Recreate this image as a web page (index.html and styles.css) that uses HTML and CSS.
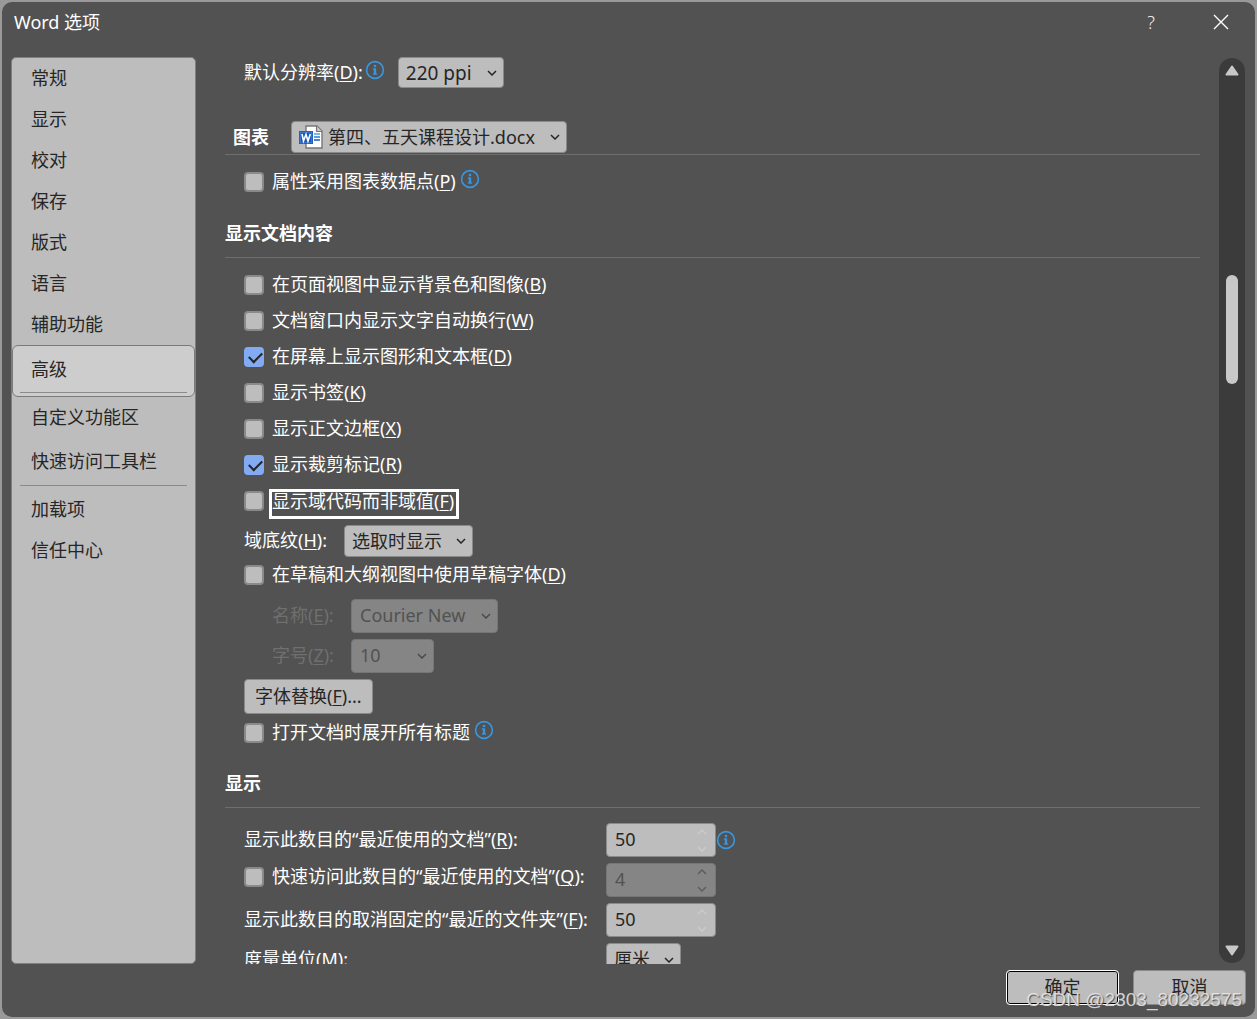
FILE: index.html
```html
<!DOCTYPE html>
<html lang="zh-CN">
<head>
<meta charset="UTF-8">
<meta name="viewport" content="width=device-width, initial-scale=1.0">
<title>Word 选项</title>
<link rel="stylesheet" href="styles.css">
</head>
<body>
    <!-- 公用图标 -->
    <svg class="symbols" width="0" height="0" aria-hidden="true">
        <symbol id="icon-info" viewBox="0 0 20 20">
            <circle cx="10" cy="10" r="8.4" fill="none" stroke="#3a96dd" stroke-width="1.6"/>
            <path d="M9 5h2v2H9zM8 8.5h3v5h1v1H8v-1h1v-4H8z" fill="#3a96dd" stroke="#3a96dd" stroke-width=".4"/>
        </symbol>
        <symbol id="icon-down" viewBox="0 0 10 6">
            <path d="M1 1l4 4 4-4" fill="none" stroke="currentColor" stroke-width="1.5"/>
        </symbol>
        <symbol id="icon-up" viewBox="0 0 10 6">
            <path d="M1 5l4-4 4 4" fill="none" stroke="currentColor" stroke-width="1.5"/>
        </symbol>
    </svg>

    <div class="window">
        <header class="titlebar">
            <h1>Word 选项</h1>
            <button type="button" class="title-btn help">?</button>
            <button type="button" class="title-btn close" aria-label="关闭">
                <svg width="16" height="16" viewBox="0 0 16 16"><path d="M1 1l14 14M15 1L1 15" stroke="#fff" stroke-width="1.4"/></svg>
            </button>
        </header>

        <div class="main">
            <nav class="menu">
                <a href="#">常规</a>
                <a href="#">显示</a>
                <a href="#">校对</a>
                <a href="#">保存</a>
                <a href="#">版式</a>
                <a href="#">语言</a>
                <a href="#">辅助功能</a>
                <a href="#" class="active">高级</a>
                <a href="#">自定义功能区</a>
                <a href="#" class="last-in-group">快速访问工具栏</a>
                <a href="#">加载项</a>
                <a href="#">信任中心</a>
            </nav>

            <div class="content">
                <div class="row first">
                    <label for="dpi">默认分辨率(<u>D</u>):</label>
                    <svg class="info"><use href="#icon-info"/></svg>
                    <span class="combo dpi">
                        <select id="dpi"><option>220 ppi</option></select>
                        <svg class="arrow"><use href="#icon-down"/></svg>
                    </span>
                </div>

                <div class="chart-head">
                    <h2><label for="chartDoc">图表</label></h2>
                    <span class="combo doc">
                        <svg class="word-icon" viewBox="0 0 24 24">
                            <path d="M7 1h11l5 5v17H7z" fill="#fff" stroke="#797774" stroke-width="1.4"/>
                            <path d="M17.500 1v5.500H23" fill="#c8c6c4" stroke="#797774" stroke-width="1.2"/>
                            <path d="M15 9h6" stroke="#41a5ee" stroke-width="1.5"/>
                            <path d="M15 12h6" stroke="#2b7cd3" stroke-width="1.5"/>
                            <path d="M15 15h6" stroke="#185abd" stroke-width="1.5"/>
                            <rect x="0" y="6" width="14" height="13" fill="#185abd"/>
                            <rect x="1.200" y="7.200" width="11.600" height="10.600" fill="none" stroke="#4a86d8" stroke-width=".8"/>
                            <path d="M3 9l1.500 7L7 9.500 9 16l2.300-7" fill="none" stroke="#fff" stroke-width="1.600"/>
                        </svg>
                        <select id="chartDoc"><option>第四、五天课程设计.docx</option></select>
                        <svg class="arrow"><use href="#icon-down"/></svg>
                    </span>
                </div>
                <div class="group">
                    <div class="row points">
                        <input type="checkbox" id="points"><label for="points">属性采用图表数据点(<u>P</u>)</label>
                        <svg class="info"><use href="#icon-info"/></svg>
                    </div>
                </div>

                <h2 class="section-title">显示文档内容</h2>
                <div class="group">
                    <div class="row"><input type="checkbox" id="bg"><label for="bg">在页面视图中显示背景色和图像(<u>B</u>)</label></div>
                    <div class="row"><input type="checkbox" id="wrap"><label for="wrap">文档窗口内显示文字自动换行(<u>W</u>)</label></div>
                    <div class="row"><input type="checkbox" id="shapes" checked><label for="shapes">在屏幕上显示图形和文本框(<u>D</u>)</label></div>
                    <div class="row"><input type="checkbox" id="bookmarks"><label for="bookmarks">显示书签(<u>K</u>)</label></div>
                    <div class="row"><input type="checkbox" id="borders"><label for="borders">显示正文边框(<u>X</u>)</label></div>
                    <div class="row"><input type="checkbox" id="crop" checked><label for="crop">显示裁剪标记(<u>R</u>)</label></div>
                    <div class="row"><input type="checkbox" id="codes"><label for="codes" class="focused">显示域代码而非域值(<u>F</u>)</label></div>
                    <div class="row shading">
                        <label for="shade">域底纹(<u>H</u>):</label>
                        <span class="combo shade">
                            <select id="shade"><option>选取时显示</option></select>
                            <svg class="arrow"><use href="#icon-down"/></svg>
                        </span>
                    </div>
                    <div class="row"><input type="checkbox" id="draft"><label for="draft">在草稿和大纲视图中使用草稿字体(<u>D</u>)</label></div>
                    <div class="sub">
                        <div class="row tall disabled">
                            <label for="fontName">名称(<u>E</u>):</label>
                            <span class="combo font-name">
                                <select id="fontName" disabled><option>Courier New</option></select>
                                <svg class="arrow"><use href="#icon-down"/></svg>
                            </span>
                        </div>
                        <div class="row tall disabled">
                            <label for="fontSize">字号(<u>Z</u>):</label>
                            <span class="combo font-size">
                                <select id="fontSize" disabled><option>10</option></select>
                                <svg class="arrow"><use href="#icon-down"/></svg>
                            </span>
                        </div>
                    </div>
                    <div class="row tall"><button type="button" class="btn">字体替换(<u>F</u>)...</button></div>
                    <div class="row last">
                        <input type="checkbox" id="expand"><label for="expand">打开文档时展开所有标题</label>
                        <svg class="info"><use href="#icon-info"/></svg>
                    </div>
                </div>

                <h2 class="section-title">显示</h2>
                <div class="group numbers">
                    <div class="row tall">
                        <div class="name"><label for="recent">显示此数目的“最近使用的文档”(<u>R</u>):</label></div>
                        <span class="spin">
                            <input type="text" id="recent" value="50">
                            <svg class="up"><use href="#icon-up"/></svg>
                            <svg class="down"><use href="#icon-down"/></svg>
                        </span>
                        <svg class="info"><use href="#icon-info"/></svg>
                    </div>
                    <div class="row tall">
                        <div class="name with-check"><input type="checkbox" id="quick"><label for="quick">快速访问此数目的“最近使用的文档”(<u>Q</u>):</label></div>
                        <span class="spin off">
                            <input type="text" id="quickNum" value="4" aria-label="快速访问数目" disabled>
                            <svg class="up"><use href="#icon-up"/></svg>
                            <svg class="down"><use href="#icon-down"/></svg>
                        </span>
                    </div>
                    <div class="row tall">
                        <div class="name"><label for="folders">显示此数目的取消固定的“最近的文件夹”(<u>F</u>):</label></div>
                        <span class="spin">
                            <input type="text" id="folders" value="50">
                            <svg class="up"><use href="#icon-up"/></svg>
                            <svg class="down"><use href="#icon-down"/></svg>
                        </span>
                    </div>
                    <div class="row tall">
                        <div class="name"><label for="unit">度量单位(<u>M</u>):</label></div>
                        <span class="combo unit">
                            <select id="unit"><option>厘米</option></select>
                            <svg class="arrow"><use href="#icon-down"/></svg>
                        </span>
                    </div>
                </div>
            </div>

            <!-- 滚动条 -->
            <div class="scrollbar">
                <svg width="14" height="11" viewBox="0 0 14 11"><path d="M7 1.500L12.500 9.500H1.500z" fill="#c8c8c8" stroke="#c8c8c8" stroke-width="2" stroke-linejoin="round"/></svg>
                <div class="track"><div class="thumb"></div></div>
                <svg width="14" height="11" viewBox="0 0 14 11"><path d="M7 9.500L12.500 1.500H1.500z" fill="#c8c8c8" stroke="#c8c8c8" stroke-width="2" stroke-linejoin="round"/></svg>
            </div>
        </div>

        <footer class="footer">
            <button type="button" class="btn default">确定</button>
            <button type="button" class="btn">取消</button>
            <span class="watermark">CSDN @2303_80232575</span>
        </footer>
    </div>
</body>
</html>
```
FILE: styles.css
```css
* {
    box-sizing: border-box;
}
body {
    margin: 0;
    background-color: #999;
    color: #fff;
    font-family: "Noto Sans", "Noto Sans CJK SC", sans-serif;
    font-size: 18px;
    line-height: 26px;
}
.symbols {
    position: absolute;
}
svg {
    flex: none;
}
u {
    text-underline-offset: 2px;
    text-decoration-thickness: 1px;
}
button, select, input {
    font: inherit;
    color: #262626;
}
.window {
    display: flex;
    flex-direction: column;
    height: 100vh;
    border: 2px solid #999;
    border-radius: 12px;
    background-color: #525252;
    overflow: hidden;
}

/* 标题栏 */
.titlebar {
    display: flex;
    align-items: center;
    height: 55px;
    padding: 0 16px 15px 12px;
}
.titlebar h1 {
    flex: 1;
    margin: 0;
    font-size: 18px;
    font-weight: normal;
}
.title-btn {
    width: 36px;
    height: 32px;
    padding: 0;
    border: 0;
    background: none;
    color: #fff;
}
.help {
    font-family: "Open Sans", sans-serif;
    font-weight: 300;
}
.close {
    display: flex;
    align-items: center;
    justify-content: center;
    margin-left: 34px;
}

.main {
    display: flex;
    flex: 1;
    min-height: 0;
    padding: 0 10px 0 9px;
}

/* 左侧菜单 */
.menu {
    flex: none;
    width: 185px;
    border: 1px solid #7f7f7f;
    border-radius: 5px;
    background-color: #bdbdbd;
}
.menu a {
    display: block;
    padding-left: 19px;
    color: #262626;
    line-height: 41px;
    text-decoration: none;
}
.menu .active {
    height: 52px;
    padding: 0 7px 0 18px;
    border: 1px solid #7a7a7a;
    border-radius: 6px;
    background-color: #cdcdcd;
    line-height: 46px;
}
.menu .active::after,
.menu .last-in-group::after {
    content: "";
    display: block;
    height: 1px;
    margin-left: -11px;
    background-color: #8a8a8a;
}
.menu .last-in-group {
    margin-bottom: 3px;
    padding-right: 8px;
    line-height: 47px;
}

/* 右侧选项 */
.content {
    flex: 1;
    min-width: 0;
    margin: 0 19px 0 29px;
    overflow: hidden;
}
h2 {
    margin: 0;
    font-size: 18px;
    font-weight: bold;
}
.row {
    display: flex;
    align-items: center;
    height: 36px;
}
.row label {
    padding-bottom: 2px;
}
.row.first {
    height: 31px;
    padding-left: 19px;
}
.row.tall {
    height: 40px;
}
.row.last {
    height: 33px;
}
.row.points {
    height: 35px;
}
.row.shading {
    height: 38px;
    padding-top: 6px;
}
.group {
    padding: 9px 0 0 19px;
}
.chart-head {
    display: flex;
    align-items: center;
    margin-top: 33px;
    padding: 0 0 1px 8px;
    border-bottom: 1px solid #6e6e6e;
}
.chart-head .combo {
    margin-left: 22px;
}
.section-title {
    height: 59px;
    padding-top: 10px;
    border-bottom: 1px solid #6e6e6e;
    line-height: 48px;
}
.info {
    width: 20px;
    height: 20px;
    margin: 0 0 5px 4px;
}
.row.first .info {
    margin-left: 2px;
}
.numbers .info {
    margin: 0;
}

input[type="checkbox"] {
    appearance: none;
    flex: none;
    width: 20px;
    height: 20px;
    margin: 0 8px 0 0;
    border: 2px solid #8a8a8a;
    border-radius: 4px;
    background-color: #bdbdbd;
}
input[type="checkbox"]:checked {
    position: relative;
    border-color: #82abf3;
    background-color: #82abf3;
}
input[type="checkbox"]:checked::after {
    content: "";
    position: absolute;
    left: 3px;
    top: 3px;
    width: 11px;
    height: 6px;
    border: solid #262626;
    border-width: 0 0 2px 2px;
    transform: rotate(-45deg);
}
.row .focused {
    margin: 5px 0 0 -3px;
    height: 30px;
    padding: 0 2px 0 0;
    border: 3px solid #fff;
    line-height: 18px;
}

/* 下拉框 */
.combo {
    position: relative;
    display: inline-flex;
    height: 32px;
}
.combo select {
    appearance: none;
    width: 100%;
    padding: 0 26px 0 7px;
    border: 1px solid #8a8a8a;
    border-radius: 4px;
    background-color: #bdbdbd;
}
.combo .arrow {
    position: absolute;
    right: 7px;
    top: 50%;
    width: 10px;
    height: 6px;
    margin-top: -3px;
    color: #262626;
    pointer-events: none;
}
.dpi {
    width: 106px;
    height: 31px;
    margin-left: 13px;
    font-size: 19px;
}
.doc {
    width: 276px;
}
.doc select {
    padding-left: 36px;
}
.word-icon {
    position: absolute;
    left: 8px;
    top: 4px;
    width: 24px;
    height: 24px;
    pointer-events: none;
}
.shade {
    width: 129px;
    margin-left: 17px;
}
.sub {
    padding: 3px 0 0 28px;
}
.sub label {
    width: 79px;
}
.sub .combo {
    height: 34px;
}
.sub select {
    padding: 0 26px 2px 8px;
}
.font-name {
    width: 147px;
}
.font-size {
    width: 83px;
}
.disabled {
    color: #6f6f6f;
}
.disabled select,
.spin.off input {
    border-color: #767676;
    background-color: #858585;
    color: #525252;
    opacity: 1;
}
.disabled .arrow {
    color: #4a4a4a;
}

/* 数字框 */
.numbers {
    padding-top: 12px;
}
.name {
    display: flex;
    align-items: center;
    width: 362px;
}
.with-check {
    padding-bottom: 6px;
}
.spin {
    position: relative;
    width: 110px;
    height: 34px;
    color: #cbcbcb;
}
.spin input {
    width: 100%;
    height: 100%;
    padding: 0 30px 3px 8px;
    border: 1px solid #8a8a8a;
    border-radius: 4px;
    background-color: #bdbdbd;
}
.spin svg {
    position: absolute;
    right: 9px;
    width: 10px;
    height: 6px;
}
.spin .up {
    top: 6px;
}
.spin .down {
    bottom: 5px;
}
.spin.off {
    color: #5e5e5e;
}
.unit {
    width: 75px;
    height: 34px;
}
.unit select {
    padding-bottom: 2px;
}

.scrollbar {
    display: flex;
    flex-direction: column;
    align-items: center;
    width: 26px;
    margin: 1px 0;
    padding: 7px 0;
    border-radius: 13px;
    background-color: #3b3b3b;
}
.track {
    flex: 1;
    padding-top: 199px;
}
.thumb {
    width: 12px;
    height: 109px;
    border-radius: 6px;
    background-color: #c8c8c8;
}

.btn {
    height: 35px;
    padding: 0 10px;
    border: 1px solid #8a8a8a;
    border-radius: 4px;
    background-color: #bdbdbd;
}
.footer {
    position: relative;
    display: flex;
    justify-content: flex-end;
    gap: 14px;
    height: 53px;
    padding: 6px 9px 0 0;
}
.footer .btn {
    width: 113px;
    padding-bottom: 2px;
}
.footer .default {
    border-color: #fff;
    box-shadow: inset 0 0 0 1px #000;
}
.watermark {
    position: absolute;
    right: 13px;
    bottom: 4px;
    color: rgba(235, 235, 235, 0.85);
    font-family: "Liberation Sans", sans-serif;
    font-size: 19px;
    text-shadow: 1px 1px 1px #555;
}
```
